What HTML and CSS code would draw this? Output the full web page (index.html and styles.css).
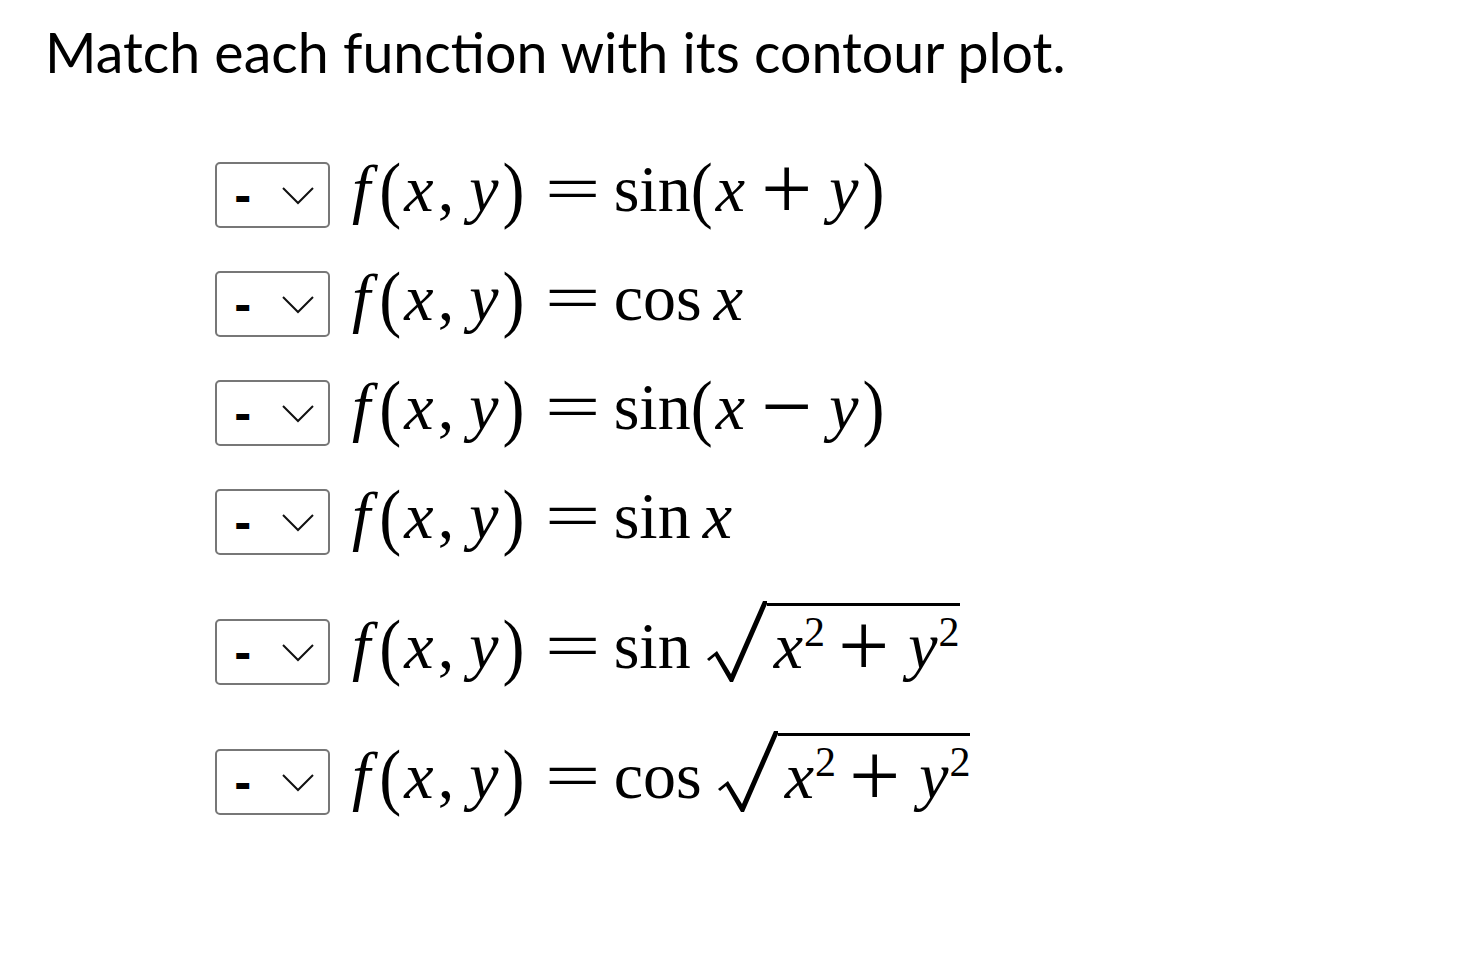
FILE: index.html
```html
<!DOCTYPE html>
<html lang="en">
<head>
  <meta charset="UTF-8" />
  <title>Contour plots</title>
  <link rel="stylesheet" href="styles.css">
</head>
<body>

  <h1 class="prompt">Match each function with its contour plot.</h1>

  <div class="matches">

    <div class="row">
      <div class="picker"><span class="dash">-</span><svg class="chev" width="32" height="18" viewBox="0 0 32 18"><path d="M1 1 L16 16 L31 1" fill="none" stroke="#111" stroke-width="2"/></svg></div>
      <div class="math"><i class="f">f</i><span class="p">(</span><i class="v">x</i>,<span class="thin"></span><i class="v">y</i><span class="p">)</span><span class="rel">=</span>sin<span class="p">(</span><i class="v">x</i><span class="bin">+</span><i class="v">y</i><span class="p">)</span></div>
    </div>

    <div class="row">
      <div class="picker"><span class="dash">-</span><svg class="chev" width="32" height="18" viewBox="0 0 32 18"><path d="M1 1 L16 16 L31 1" fill="none" stroke="#111" stroke-width="2"/></svg></div>
      <div class="math"><i class="f">f</i><span class="p">(</span><i class="v">x</i>,<span class="thin"></span><i class="v">y</i><span class="p">)</span><span class="rel">=</span>cos<span class="op-gap"></span><i class="v">x</i></div>
    </div>

    <div class="row">
      <div class="picker"><span class="dash">-</span><svg class="chev" width="32" height="18" viewBox="0 0 32 18"><path d="M1 1 L16 16 L31 1" fill="none" stroke="#111" stroke-width="2"/></svg></div>
      <div class="math"><i class="f">f</i><span class="p">(</span><i class="v">x</i>,<span class="thin"></span><i class="v">y</i><span class="p">)</span><span class="rel">=</span>sin<span class="p">(</span><i class="v">x</i><span class="bin">&minus;</span><i class="v">y</i><span class="p">)</span></div>
    </div>

    <div class="row">
      <div class="picker"><span class="dash">-</span><svg class="chev" width="32" height="18" viewBox="0 0 32 18"><path d="M1 1 L16 16 L31 1" fill="none" stroke="#111" stroke-width="2"/></svg></div>
      <div class="math"><i class="f">f</i><span class="p">(</span><i class="v">x</i>,<span class="thin"></span><i class="v">y</i><span class="p">)</span><span class="rel">=</span>sin<span class="op-gap"></span><i class="v">x</i></div>
    </div>

    <div class="row tall">
      <div class="picker"><span class="dash">-</span><svg class="chev" width="32" height="18" viewBox="0 0 32 18"><path d="M1 1 L16 16 L31 1" fill="none" stroke="#111" stroke-width="2"/></svg></div>
      <div class="math"><i class="f">f</i><span class="p">(</span><i class="v">x</i>,<span class="thin"></span><i class="v">y</i><span class="p">)</span><span class="rel">=</span>sin<svg class="radical" width="60" height="81" viewBox="0 0 60 81"><polygon points="0,58 10,50 24,73 56,0 60,0 60,3 26,81 23,81 8,55 2,60" fill="#000"/></svg><span class="radicand"><i class="v base">x</i><sup>2</sup><span class="bin">+</span><i class="v base">y</i><sup>2</sup></span></div>
    </div>

    <div class="row tall">
      <div class="picker"><span class="dash">-</span><svg class="chev" width="32" height="18" viewBox="0 0 32 18"><path d="M1 1 L16 16 L31 1" fill="none" stroke="#111" stroke-width="2"/></svg></div>
      <div class="math"><i class="f">f</i><span class="p">(</span><i class="v">x</i>,<span class="thin"></span><i class="v">y</i><span class="p">)</span><span class="rel">=</span>cos<svg class="radical" width="60" height="81" viewBox="0 0 60 81"><polygon points="0,58 10,50 24,73 56,0 60,0 60,3 26,81 23,81 8,55 2,60" fill="#000"/></svg><span class="radicand"><i class="v base">x</i><sup>2</sup><span class="bin">+</span><i class="v base">y</i><sup>2</sup></span></div>
    </div>

  </div>

</body>
</html>
```

FILE: styles.css
```css
body {
  margin: 0;
  background: #fff;
  color: #000;
}

.prompt {
  font-family: Lato, "Open Sans", sans-serif;
  font-weight: normal;
  font-size: 55.5px;
  line-height: 1;
  margin: 0;
  padding: 24px 0 0 45px;
}

.matches {
  display: flex;
  flex-direction: column;
  gap: 43px;
  padding: 82px 0 120px 215px;
}

.row {
  display: flex;
  align-items: center;
}

.row.tall {
  margin-top: 21px;
}

/* select box */
.picker {
  box-sizing: border-box;
  width: 115px;
  height: 66px;
  border: 2px solid #777;
  border-radius: 5px;
  display: flex;
  align-items: center;
  padding-left: 17px;
  font-family: "DejaVu Sans", sans-serif;
  font-size: 42px;
  font-weight: bold;
  line-height: 1;
}

.dash {
  width: 48px;
  margin-top: 4px;
}

.chev {
  margin-top: 2px;
}

/* formula */
.math {
  font-family: "Liberation Serif", serif;
  font-size: 66px;
  line-height: 54px;
  height: 66px;
  margin-left: 20px;
  white-space: nowrap;
}

.math i {
  font-style: italic;
}

.f {
  padding: 0 9px 0 2px;
}

.v {
  padding: 0 4px 0 3px;
}

.v.base {
  padding-right: 1px;
}

.p {
  display: inline-block;
  transform: scaleY(1.12);
}

.thin {
  display: inline-block;
  width: 12px;
}

.op-gap {
  display: inline-block;
  width: 9px;
}

.rel {
  display: inline-block;
  transform: scaleX(1.5);
  margin: 0 22px 0 30px;
}

.bin {
  display: inline-block;
  transform: scale(1.38);
  margin: 0 21px 0 19px;
}

.radical {
  vertical-align: -14px;
  margin: -19px 0 0 16px;
}

.radicand {
  display: inline-block;
  border-top: 3px solid #000;
  line-height: 66px;
  padding: 7px 0 0 4px;
  margin-top: -17px;
}

.radicand sup {
  font-size: 42px;
  line-height: 0;
  vertical-align: 22px;
}

.radicand .bin {
  margin: 0 23px 0 20px;
}
```
